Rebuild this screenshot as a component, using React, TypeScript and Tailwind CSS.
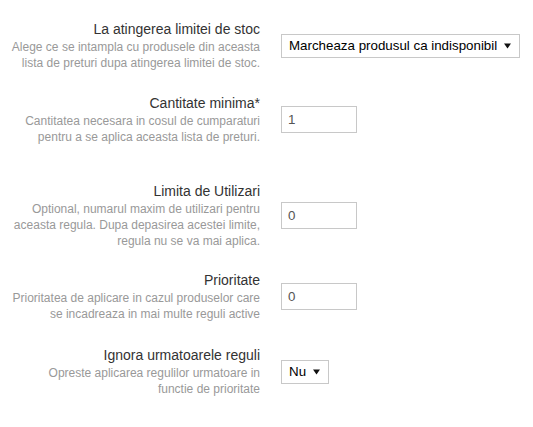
import React from "react";

const Arrow = () => (
  <svg width="7" height="6" viewBox="0 0 7 6" className="shrink-0">
    <path d="M0 0.5 L7 0.5 L3.5 5.5 Z" fill="#111" />
  </svg>
);

type RowProps = {
  title: string;
  desc: string[];
  control: React.ReactNode;
  mt: string;
};

const Row = ({ title, desc, control, mt }: RowProps) => (
  <div className={`flex items-center ${mt}`}>
    <div className="w-[250px] shrink-0 text-right">
      <div className="text-[14px] leading-[19px] text-[#333]">{title}</div>
      <div className="text-[12px] leading-[16px] text-[#999]">
        {desc.map((d, i) => (
          <div key={i}>{d}</div>
        ))}
      </div>
    </div>
    <div className="ml-[21px]">{control}</div>
  </div>
);

const Input = ({ value }: { value: string }) => (
  <div className="flex h-[27px] w-[76px] items-center border border-[#c8c8c8] bg-white pl-[6px] text-[13.33px] text-[#555]">
    {value}
  </div>
);

const Select = ({ value, w }: { value: string; w: string }) => (
  <div
    className={`flex h-[24px] ${w} items-center justify-between border border-[#c8c8c8] bg-white pl-[7px] pr-[8px] text-[13.33px] text-black`}
  >
    <span className="whitespace-nowrap">{value}</span>
    <Arrow />
  </div>
);

export default function App() {
  return (
    <div
      className="h-[427px] w-[533px] bg-white pl-[10px] pt-[20px]"
      style={{ fontFamily: '"Liberation Sans", Arial, sans-serif' }}
    >
      <Row
        mt="mt-0"
        title="La atingerea limitei de stoc"
        desc={[
          "Alege ce se intampla cu produsele din aceasta",
          "lista de preturi dupa atingerea limitei de stoc.",
        ]}
        control={<Select value="Marcheaza produsul ca indisponibil" w="w-[239px]" />}
      />
      <Row
        mt="mt-[23px]"
        title="Cantitate minima*"
        desc={[
          "Cantitatea necesara in cosul de cumparaturi",
          "pentru a se aplica aceasta lista de preturi.",
        ]}
        control={<Input value="1" />}
      />
      <Row
        mt="mt-[37px]"
        title="Limita de Utilizari"
        desc={[
          "Optional, numarul maxim de utilizari pentru",
          "aceasta regula. Dupa depasirea acestei limite,",
          "regula nu se va mai aplica.",
        ]}
        control={<Input value="0" />}
      />
      <Row
        mt="mt-[22px]"
        title="Prioritate"
        desc={[
          "Prioritatea de aplicare in cazul produselor care",
          "se incadreaza in mai multe reguli active",
        ]}
        control={<Input value="0" />}
      />
      <Row
        mt="mt-[24px]"
        title="Ignora urmatoarele reguli"
        desc={["Opreste aplicarea regulilor urmatoare in", "functie de prioritate"]}
        control={<Select value="Nu" w="w-[48px]" />}
      />
    </div>
  );
}
